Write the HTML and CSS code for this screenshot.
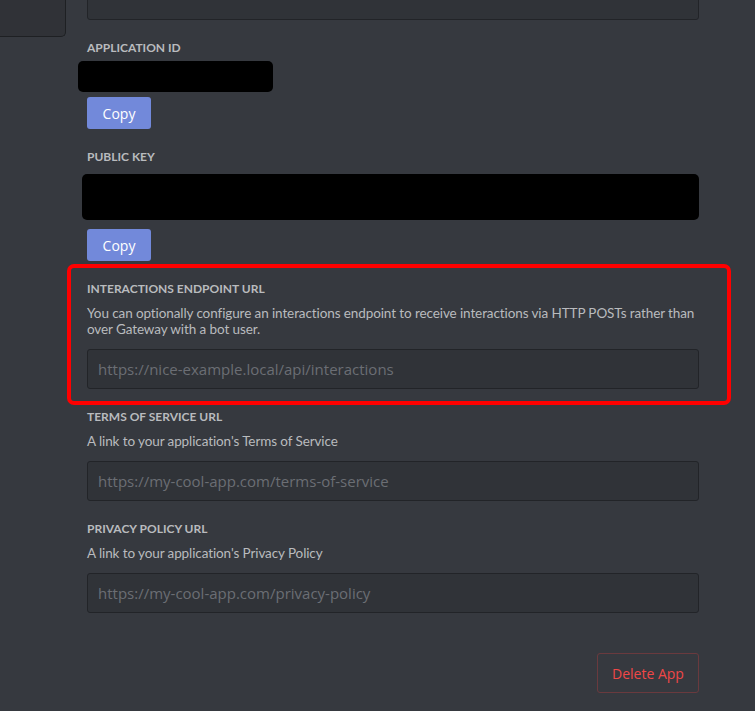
FILE: index.html
```html
<!DOCTYPE html>
<html lang="en">
<head>
<meta charset="utf-8">
<title>General Information</title>
<link rel="stylesheet" href="styles.css">
</head>
<body>
<div class="page">
  <aside class="side">
    <div class="side-box"></div>
  </aside>
  <main class="main">
    <input class="input top-input" type="text" aria-label="Description">

    <section class="field">
      <h5 class="label">Application ID</h5>
      <div class="redact redact-id"></div>
      <button class="btn-copy" type="button">Copy</button>
    </section>

    <section class="field">
      <h5 class="label">Public Key</h5>
      <div class="redact redact-key"></div>
      <button class="btn-copy" type="button">Copy</button>
    </section>

    <section class="field highlighted">
      <div class="highlight-ring"></div>
      <h5 class="label">Interactions Endpoint URL</h5>
      <p class="desc">You can optionally configure an interactions endpoint to receive interactions via HTTP POSTs rather than over Gateway with a bot user.</p>
      <input class="input" type="text" placeholder="https://nice-example.local/api/interactions">
    </section>

    <section class="field">
      <h5 class="label">Terms of Service URL</h5>
      <p class="desc">A link to your application's Terms of Service</p>
      <input class="input" type="text" placeholder="https://my-cool-app.com/terms-of-service">
    </section>

    <section class="field">
      <h5 class="label">Privacy Policy URL</h5>
      <p class="desc">A link to your application's Privacy Policy</p>
      <input class="input" type="text" placeholder="https://my-cool-app.com/privacy-policy">
    </section>

    <div class="actions">
      <button class="btn-delete" type="button">Delete App</button>
    </div>
  </main>
</div>
</body>
</html>
```

FILE: styles.css
```css
* { box-sizing: border-box; }

html, body {
  margin: 0;
  padding: 0;
  background: #36393f;
  height: 100%;
  overflow: hidden;
}

body {
  font-family: "Lato", "Noto Sans", sans-serif;
  color: #b9bbbe;
}

.page {
  display: flex;
}

.side {
  width: 66px;
  flex: none;
}

.side-box {
  height: 37px;
  background: #303237;
  border-right: 1px solid #1e2023;
  border-bottom: 1px solid #1e2023;
  border-bottom-right-radius: 5px;
}

.main {
  margin-left: 21px;
  width: 612px;
  display: flex;
  flex-direction: column;
}

.input {
  display: block;
  width: 612px;
  height: 40px;
  padding: 0 10px;
  background: #303338;
  border: 1px solid #222428;
  border-radius: 3px;
  font-family: "Open Sans", "Noto Sans", sans-serif;
  font-size: 15px;
  color: #dcddde;
  outline: none;
}

.input::placeholder {
  color: #6b6e74;
}

.top-input {
  margin-top: -20px;
}

.field {
  margin-top: 20px;
  display: flex;
  flex-direction: column;
  align-items: flex-start;
}

.label {
  margin: 0;
  height: 16px;
  line-height: 16px;
  font-size: 12px;
  font-weight: 700;
  text-transform: uppercase;
  color: #b9bbbe;
  letter-spacing: 0;
}

.desc {
  margin: 8px 0 12px;
  font-size: 13.5px;
  letter-spacing: -0.1px;
  line-height: 16px;
  color: #b9bbbe;
}

.redact {
  background: #000;
  border-radius: 5px;
}

.redact-id {
  width: 195px;
  height: 31px;
  margin: 5px 0 0 -9px;
}

.redact-key {
  width: 617px;
  height: 46px;
  margin: 9px 0 0 -5px;
}

.btn-copy {
  margin-top: 5px;
  width: 64px;
  height: 32px;
  border: none;
  border-radius: 3px;
  background: #7289da;
  color: #fff;
  font-family: "Open Sans", "Noto Sans", sans-serif;
  font-size: 14px;
  padding: 0;
}

.redact-key + .btn-copy {
  margin-top: 9px;
}

.highlighted {
  position: relative;
}

.highlight-ring {
  position: absolute;
  left: -20px;
  top: -17px;
  right: -32px;
  bottom: -16px;
  border: 4px solid #ff0000;
  border-radius: 7px;
  pointer-events: none;
}

.actions {
  margin-top: 40px;
  display: flex;
  justify-content: flex-end;
}

.btn-delete {
  width: 102px;
  height: 40px;
  background: transparent;
  border: 1px solid #6a3a3e;
  border-radius: 3px;
  color: #f04747;
  font-family: "Open Sans", "Noto Sans", sans-serif;
  font-size: 14px;
  padding: 0;
}
```
